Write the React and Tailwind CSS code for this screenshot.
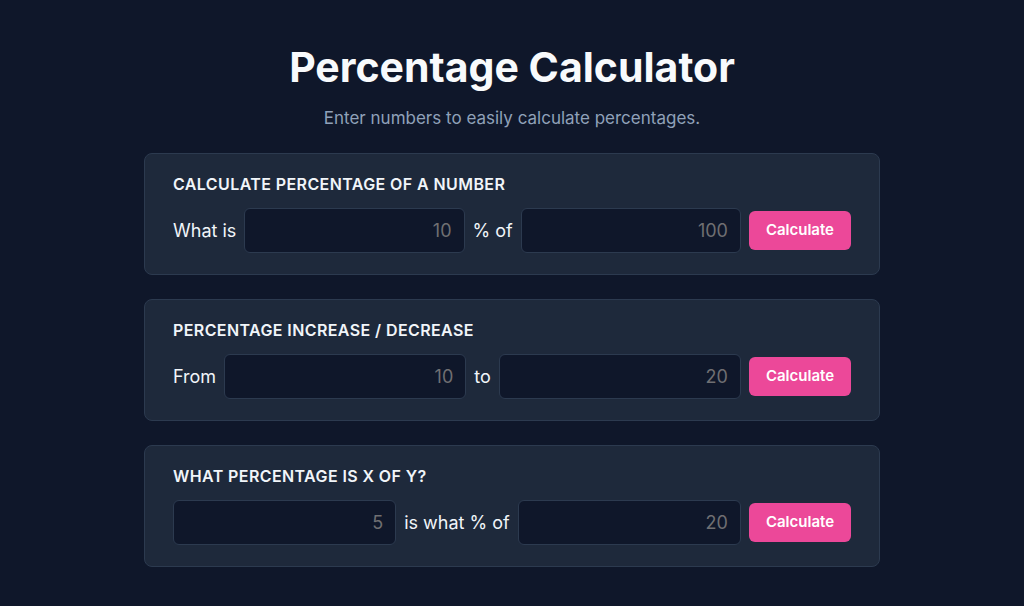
const Field = ({ value }) => (
  <input
    type="text"
    placeholder={value}
    className="flex-1 min-w-0 h-[45px] bg-[#0f172a] border border-[#2c3a4f] rounded-md px-3 text-right text-lg text-slate-200 placeholder:text-[#6f6f72] outline-none"
  />
);

const Label = ({ children }) => (
  <span className="text-lg text-slate-100 whitespace-nowrap">{children}</span>
);

const CalcButton = () => (
  <button className="bg-[#ec4899] hover:bg-pink-600 text-white text-[15px] font-semibold rounded-md h-[39px] px-[17px]">
    Calculate
  </button>
);

const Card = ({ title, children }) => (
  <div className="bg-[#1e293b] border border-[#2c3a4f] rounded-lg px-7 pt-[18px] pb-[21px]">
    <h2 className="text-base leading-6 font-semibold uppercase tracking-wide text-slate-100 mb-3">
      {title}
    </h2>
    <div className="flex items-center gap-2">{children}</div>
  </div>
);

export default function App() {
  return (
    <div
      className="min-h-screen bg-[#0f172a] text-white"
      style={{ fontFamily: "Inter, 'Noto Sans', sans-serif" }}
    >
      <div className="w-[736px] mx-auto pt-[43px] pb-10">
        <h1 className="text-[41px] leading-[48px] font-bold text-center text-slate-50">
          Percentage Calculator
        </h1>
        <p className="mt-[15px] text-[17px] leading-6 text-center text-slate-400">
          Enter numbers to easily calculate percentages.
        </p>
        <div className="mt-[23px] flex flex-col gap-6">
          <Card title="Calculate percentage of a number">
            <Label>What is</Label>
            <Field value="10" />
            <Label>% of</Label>
            <Field value="100" />
            <CalcButton />
          </Card>
          <Card title="Percentage increase / decrease">
            <Label>From</Label>
            <Field value="10" />
            <Label>to</Label>
            <Field value="20" />
            <CalcButton />
          </Card>
          <Card title="What percentage is X of Y?">
            <Field value="5" />
            <Label>is what % of</Label>
            <Field value="20" />
            <CalcButton />
          </Card>
        </div>
      </div>
    </div>
  );
}
